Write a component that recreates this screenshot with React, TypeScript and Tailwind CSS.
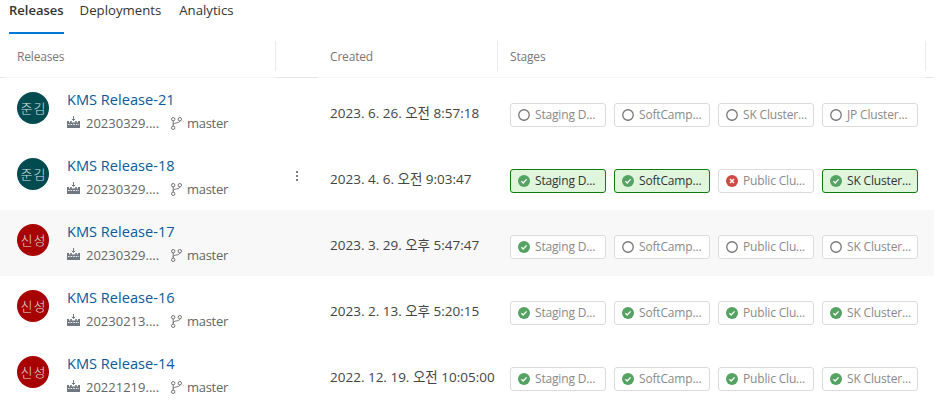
import React from 'react';

type Stage = { name: string; state: 'none' | 'ok' | 'okActive' | 'failed' };

const releases: { name: string; build: string; who: string; color: string; date: string; more?: boolean; hover?: boolean; stages: Stage[] }[] = [
  {
    name: 'KMS Release-21', build: '20230329....', who: '준김', color: 'bg-[#004b50]', date: '2023. 6. 26. 오전 8:57:18',
    stages: [
      { name: 'Staging D...', state: 'none' },
      { name: 'SoftCamp...', state: 'none' },
      { name: 'SK Cluster...', state: 'none' },
      { name: 'JP Cluster...', state: 'none' },
    ],
  },
  {
    name: 'KMS Release-18', build: '20230329....', who: '준김', color: 'bg-[#004b50]', date: '2023. 4. 6. 오전 9:03:47', more: true,
    stages: [
      { name: 'Staging D...', state: 'okActive' },
      { name: 'SoftCamp...', state: 'okActive' },
      { name: 'Public Clu...', state: 'failed' },
      { name: 'SK Cluster...', state: 'okActive' },
    ],
  },
  {
    name: 'KMS Release-17', build: '20230329....', who: '신성', color: 'bg-[#a80000]', date: '2023. 3. 29. 오후 5:47:47', hover: true,
    stages: [
      { name: 'Staging D...', state: 'ok' },
      { name: 'SoftCamp...', state: 'none' },
      { name: 'Public Clu...', state: 'none' },
      { name: 'SK Cluster...', state: 'none' },
    ],
  },
  {
    name: 'KMS Release-16', build: '20230213....', who: '신성', color: 'bg-[#a80000]', date: '2023. 2. 13. 오후 5:20:15',
    stages: [
      { name: 'Staging D...', state: 'ok' },
      { name: 'SoftCamp...', state: 'ok' },
      { name: 'Public Clu...', state: 'ok' },
      { name: 'SK Cluster...', state: 'ok' },
    ],
  },
  {
    name: 'KMS Release-14', build: '20221219....', who: '신성', color: 'bg-[#a80000]', date: '2022. 12. 19. 오전 10:05:00',
    stages: [
      { name: 'Staging D...', state: 'ok' },
      { name: 'SoftCamp...', state: 'ok' },
      { name: 'Public Clu...', state: 'ok' },
      { name: 'SK Cluster...', state: 'ok' },
    ],
  },
];

const StatusIcon = ({ state }: { state: Stage['state'] }) => {
  if (state === 'none') {
    return (
      <svg width="12" height="12" viewBox="0 0 12 12" className="shrink-0">
        <circle cx="6" cy="6" r="5.25" fill="none" stroke="#767676" strokeWidth="1.3" />
      </svg>
    );
  }
  if (state === 'failed') {
    return (
      <svg width="12" height="12" viewBox="0 0 12 12" className="shrink-0">
        <circle cx="6" cy="6" r="6" fill="#cd4a45" />
        <path d="M4 4l4 4M8 4l-4 4" stroke="#fff" strokeWidth="1.4" />
      </svg>
    );
  }
  return (
    <svg width="12" height="12" viewBox="0 0 12 12" className="shrink-0">
      <circle cx="6" cy="6" r="6" fill="#55a362" />
      <path d="M3.4 6.2l1.8 1.8 3.4-3.6" fill="none" stroke="#fff" strokeWidth="1.3" />
    </svg>
  );
};

const BuildIcon = () => (
  <svg width="13" height="12" viewBox="0 0 13 12" className="-mt-[2px] shrink-0">
    <path d="M6.5 0v4.2M4.8 2.8l1.7 1.7 1.7-1.7" fill="none" stroke="#6f7780" strokeWidth="1" />
    <path d="M0 5h2v1.6h1.2V5h1.6v1.6h3.4V5h1.6v1.6H11V5h2v7H0z" fill="#6f7780" />
    <path d="M1 8.5h11" stroke="#fff" strokeWidth="0.9" strokeDasharray="1.6 1" />
  </svg>
);

const BranchIcon = () => (
  <svg width="11" height="13" viewBox="0 0 11 13" className="shrink-0">
    <g fill="none" stroke="#707070" strokeWidth="1">
      <circle cx="2.2" cy="2.2" r="1.7" />
      <circle cx="8.8" cy="2.2" r="1.7" />
      <circle cx="2.2" cy="10.8" r="1.7" />
      <path d="M2.2 3.9v5.2M8.8 3.9c0 2.6-6.6 1.6-6.6 3.8" />
    </g>
  </svg>
);

const StagePill = ({ stage }: { stage: Stage }) => {
  const active = stage.state === 'okActive';
  return (
    <div
      className={`flex h-6 w-24 items-center gap-[5px] rounded-[3px] border px-[7px] text-xs tracking-[-0.17px] ${
        active ? 'border-[#107c10] bg-[#dff6dd] text-[#333333]' : 'border-[#dcdcdc] bg-white text-[#8a8a8a]'
      }`}
    >
      <StatusIcon state={stage.state} />
      <span className="whitespace-nowrap">{stage.name}</span>
    </div>
  );
};

export default function App() {
  return (
    <div className="h-[404px] w-[940px] overflow-hidden bg-white font-['Open_Sans','Noto_Sans_CJK_KR',sans-serif] text-sm">
      {/* Tabs */}
      <div className="flex h-[34px] pl-[9px] text-[13.2px] text-[#333333]">
        <div className="h-[34px] border-b-2 border-[#0078d4] pt-[1px] text-[13px] font-semibold">Releases</div>
        <div className="ml-4 pt-[1px]">Deployments</div>
        <div className="ml-[18px] pt-[1px]">Analytics</div>
      </div>

      {/* Table header */}
      <div className="flex h-[43px] w-[934px] pt-[7px] text-xs tracking-[-0.17px] text-[#777777]">
        <div className="flex h-[30px] w-[276px] items-center border-r border-[#eaeaea] pl-[17px] pt-[2px]">Releases</div>
        <div className="flex h-[30px] w-[222px] items-center border-r border-[#eaeaea] pl-[54px] pt-[2px]">Created</div>
        <div className="flex h-[30px] w-[428px] items-center border-r border-[#eaeaea] pl-3 pt-[2px]">Stages</div>
      </div>
      <div className="flex h-px w-[934px] bg-[#f6f6f6]">
        <div className="w-[5px] bg-[#e6e6e6]" />
        <div className="ml-[271px] w-[42px] bg-[#e6e6e6]" />
        <div className="ml-auto w-2 bg-[#e6e6e6]" />
      </div>

      {/* Rows */}
      {releases.map((r) => (
        <div key={r.name} className={`flex h-[66px] w-[934px] ${r.hover ? 'bg-[#f8f8f8]' : ''}`}>
          <div className="flex w-[276px] shrink-0 pl-[17px] pt-[14px]">
            <div className={`flex h-8 w-8 items-center justify-center rounded-full pl-[1px] text-[13px] font-light tracking-[1px] text-[#d8e0e0] ${r.color}`}>{r.who}</div>
            <div className="-mt-[2px] ml-[18px]">
              <div className="text-[14.6px] leading-[18px] text-[#0a5a9c]">{r.name}</div>
              <div className="mt-[6px] flex items-center text-[13px] leading-[18px] text-[#666666]">
                <BuildIcon />
                <span className="ml-[6px] w-[85px] whitespace-nowrap">{r.build}</span>
                <BranchIcon />
                <span className="ml-[5px] tracking-[-0.3px]">master</span>
              </div>
            </div>
          </div>
          <div className="flex w-[54px] shrink-0 justify-center pr-3 pt-[26px]">
            {r.more && (
              <svg width="4" height="12" viewBox="0 0 4 12" fill="#555555">
                <circle cx="2" cy="2" r="1" /><circle cx="2" cy="6" r="1" /><circle cx="2" cy="10" r="1" />
              </svg>
            )}
          </div>
          <div className="flex w-[180px] shrink-0 items-start whitespace-nowrap pt-[26px] text-[13.5px] leading-[18px] text-[#444444]">{r.date}</div>
          <div className="flex gap-2 pt-[25px]">
            {r.stages.map((s) => (
              <StagePill key={s.name} stage={s} />
            ))}
          </div>
        </div>
      ))}
    </div>
  );
}
